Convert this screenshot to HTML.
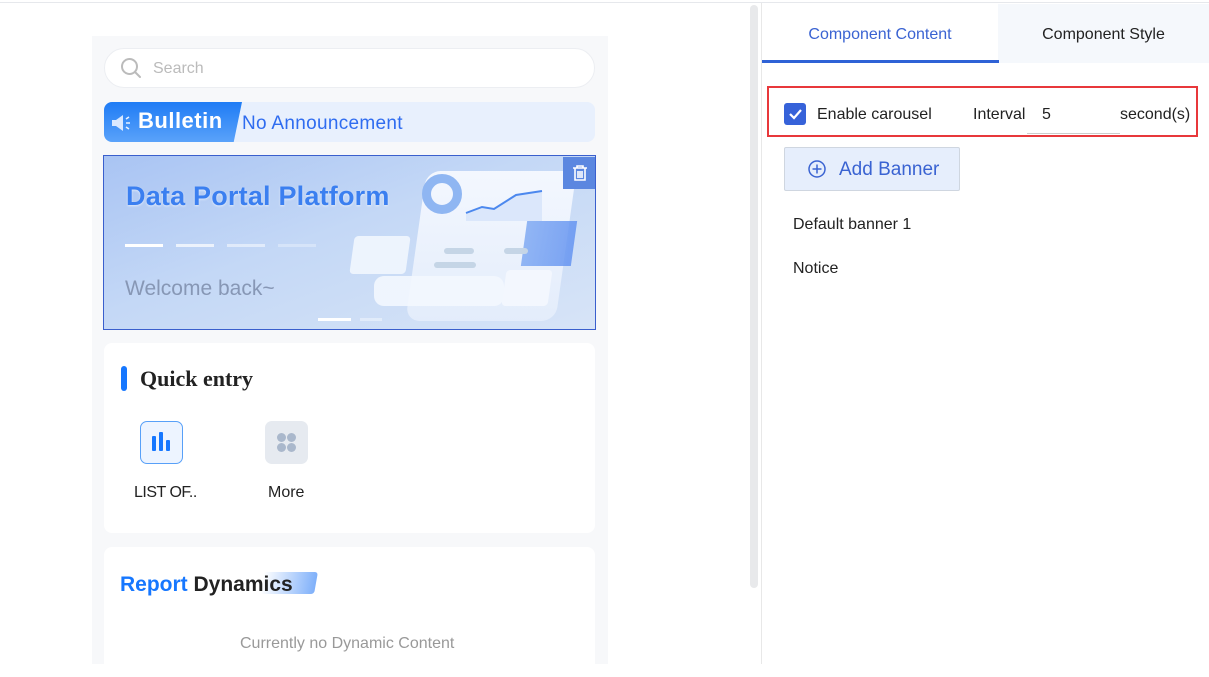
<!DOCTYPE html>
<html><head><meta charset="utf-8"><style>
*{box-sizing:border-box;margin:0;padding:0}
body{width:1209px;height:664px;overflow:hidden;background:#fff;font-family:"Liberation Sans",sans-serif;position:relative}
.a{position:absolute}
</style></head><body>
<div class="a" style="left:0;top:2px;width:1209px;height:1px;background:#e6e8ec"></div>
<!-- left phone -->
<div class="a" style="left:92px;top:36px;width:516px;height:628px;background:#f7f8fa"></div>
<div class="a" style="left:104px;top:48px;width:491px;height:40px;background:#fff;border:1px solid #eceef2;border-radius:20px"></div>
<svg class="a" style="left:120px;top:57px" width="22" height="22" viewBox="0 0 22 22"><circle cx="9.5" cy="9.5" r="7.5" fill="none" stroke="#bbb" stroke-width="2"/><path d="M15 15l5 5" stroke="#bbb" stroke-width="2" stroke-linecap="round"/></svg>
<div class="a" style="left:153px;top:60px;font-size:16px;color:#bbb">Search</div>
<div class="a" style="left:104px;top:102px;width:491px;height:40px;background:#e8f0fd;border-radius:8px"></div>
<div class="a" style="left:104px;top:102px;width:138px;height:40px;background:linear-gradient(180deg,#1f7cf5,#5aa2fa);border-radius:8px 0 0 8px;clip-path:polygon(0 0,100% 0,94% 100%,0 100%)"></div>
<svg class="a" style="left:110px;top:113px" width="22" height="20" viewBox="0 0 22 20"><path d="M2 7h4l7-5v16l-7-5H2z" fill="#eaf2ff" opacity=".9"/><path d="M16 6l3-2M16 10h4M16 14l3 2" stroke="#eaf2ff" stroke-width="1.5"/></svg>
<div class="a" style="left:138px;top:108px;font-size:22px;font-weight:bold;color:#fff;letter-spacing:0.5px">Bulletin</div>
<div class="a" style="left:242px;top:113px;font-size:19px;color:#2f6cf0;letter-spacing:0.3px">No Announcement</div>
<div class="a" style="left:103px;top:155px;width:493px;height:175px;border:1px solid #3a5fcd;background:linear-gradient(160deg,#a9c4f3 0%,#c4d8f6 45%,#d7e4f7 100%);overflow:hidden">
 <div class="a" style="left:22px;top:25px;font-size:27px;font-weight:bold;color:#3b7ff0;letter-spacing:0.2px;text-shadow:0 1px 2px rgba(255,255,255,.6)">Data Portal Platform</div>
 <div class="a" style="left:21px;top:88px;width:38px;height:3px;background:#fff"></div>
 <div class="a" style="left:72px;top:88px;width:38px;height:3px;background:#fff;opacity:.7"></div>
 <div class="a" style="left:123px;top:88px;width:38px;height:3px;background:#fff;opacity:.5"></div>
 <div class="a" style="left:174px;top:88px;width:38px;height:3px;background:#fff;opacity:.3"></div>
 <div class="a" style="left:21px;top:121px;font-size:21px;color:#8797b5">Welcome back~</div>
 <div class="a" style="left:214px;top:162px;width:33px;height:3px;background:#fff"></div>
 <div class="a" style="left:256px;top:162px;width:22px;height:3px;background:#fff;opacity:.4"></div>
 <div class="a" style="left:312px;top:15px;width:150px;height:150px;background:linear-gradient(180deg,#f6f9ff,#e4edfb);border-radius:14px;transform:skewX(-8deg);opacity:.95"></div>
 <div class="a" style="left:318px;top:18px;width:40px;height:40px;border-radius:50%;border:9px solid #8fb6f2"></div>
 <path></path>
 <svg class="a" style="left:360px;top:25px" width="90" height="40" viewBox="0 0 90 40"><path d="M2 32l16-6 12 2 22-14 26-4v30H2z" fill="#dbe7fb"/><path d="M2 32l16-6 12 2 22-14 26-4" fill="none" stroke="#4c88ee" stroke-width="2"/></svg>
 <div class="a" style="left:420px;top:65px;width:50px;height:45px;background:linear-gradient(90deg,#7aa6f2,#5e8ff0);opacity:.8;transform:skewX(-8deg)"></div>
 <div class="a" style="left:248px;top:80px;width:56px;height:38px;background:#f1f6fe;border-radius:4px;opacity:.9;transform:skewX(-8deg)"></div>
 <div class="a" style="left:340px;top:92px;width:30px;height:6px;background:#c5d5e6;border-radius:3px"></div>
 <div class="a" style="left:330px;top:106px;width:42px;height:6px;background:#c5d5e6;border-radius:3px"></div>
 <div class="a" style="left:400px;top:92px;width:24px;height:6px;background:#c5d5e6;border-radius:3px"></div>
 <div class="a" style="left:270px;top:120px;width:130px;height:30px;background:#f3f7fe;border-radius:10px;opacity:.9"></div>
 <div class="a" style="left:400px;top:114px;width:46px;height:36px;background:#f3f7fe;border-radius:4px;transform:skewX(-8deg)"></div>
 <div class="a" style="left:459px;top:1px;width:33px;height:32px;background:#5b87e0"></div>
 <svg class="a" style="left:467px;top:8px" width="18" height="18" viewBox="0 0 18 18"><path d="M2 4h14M6 4V2h6v2M4 4v12h10V4M7 7v7M9 7v7M11 7v7" fill="none" stroke="#fff" stroke-width="1.6"/></svg>
</div>
<!-- quick entry -->
<div class="a" style="left:104px;top:343px;width:491px;height:190px;background:#fff;border-radius:8px"></div>
<div class="a" style="left:121px;top:366px;width:6px;height:25px;background:#1677ff;border-radius:3px"></div>
<div class="a" style="left:140px;top:366px;font-family:'Liberation Serif',serif;font-size:22px;font-weight:bold;color:#222">Quick entry</div>
<div class="a" style="left:140px;top:421px;width:43px;height:43px;border:1.5px solid #58a0f8;background:#edf4ff;border-radius:7px"></div>
<div class="a" style="left:152px;top:436px;width:4px;height:15px;background:#1677ff;border-radius:1px"></div>
<div class="a" style="left:159px;top:432px;width:4px;height:19px;background:#1677ff;border-radius:1px"></div>
<div class="a" style="left:166px;top:440px;width:4px;height:11px;background:#1677ff;border-radius:1px"></div>
<div class="a" style="left:265px;top:421px;width:43px;height:43px;background:#e6eaf0;border-radius:7px"></div>
<svg class="a" style="left:276px;top:432px" width="21" height="21" viewBox="0 0 21 21"><g fill="#aab8cc"><circle cx="5.5" cy="5.5" r="4.5"/><circle cx="15.5" cy="5.5" r="4.5"/><circle cx="5.5" cy="15.5" r="4.5"/><circle cx="15.5" cy="15.5" r="4.5"/></g></svg>
<div class="a" style="left:134px;top:484px;font-size:16px;color:#222;letter-spacing:-0.5px">LIST OF..</div>
<div class="a" style="left:268px;top:484px;font-size:16px;color:#222">More</div>
<!-- report -->
<div class="a" style="left:104px;top:547px;width:491px;height:130px;background:#fff;border-radius:8px"></div>
<div class="a" style="left:262px;top:572px;width:54px;height:22px;background:linear-gradient(90deg,rgba(120,170,250,0),#7fb0fa);transform:skewX(-10deg);border-radius:3px"></div>
<div class="a" style="left:120px;top:573px;font-size:21px;font-weight:bold;color:#1677ff">Report <span style="color:#222">Dynamics</span></div>
<div class="a" style="left:240px;top:635px;font-size:16px;color:#999">Currently no Dynamic Content</div>
<!-- scrollbar -->
<div class="a" style="left:750px;top:5px;width:8px;height:583px;background:#e8e9eb;border-radius:4px"></div>
<div class="a" style="left:761px;top:3px;width:1px;height:661px;background:#e8e8e8"></div>
<!-- right -->
<div class="a" style="left:998px;top:4px;width:211px;height:59px;background:#f5f8fc"></div>
<div class="a" style="left:762px;top:60px;width:237px;height:3px;background:#2f62d6"></div>
<div class="a" style="left:762px;top:26px;width:236px;text-align:center;font-size:16px;color:#3a63d2">Component Content</div>
<div class="a" style="left:998px;top:26px;width:211px;text-align:center;font-size:16px;color:#222">Component Style</div>
<div class="a" style="left:767px;top:86px;width:431px;height:51px;border:2px solid #e8383b"></div>
<div class="a" style="left:784px;top:103px;width:22px;height:22px;background:#3662d9;border-radius:3px"></div>
<svg class="a" style="left:784px;top:103px" width="22" height="22" viewBox="0 0 22 22"><path d="M6 11l4 4 7-8" fill="none" stroke="#fff" stroke-width="2.2"/></svg>
<div class="a" style="left:817px;top:106px;font-size:16px;color:#222">Enable carousel</div>
<div class="a" style="left:973px;top:106px;font-size:16px;color:#222">Interval</div>
<div class="a" style="left:1042px;top:106px;font-size:16px;color:#222">5</div>
<div class="a" style="left:1027px;top:133px;width:93px;height:1px;background:#ccc"></div>
<div class="a" style="left:1120px;top:106px;font-size:16px;color:#222">second(s)</div>
<div class="a" style="left:784px;top:147px;width:176px;height:44px;background:#e6eefc;border:1px solid #cfd6e0;border-radius:2px"></div>
<svg class="a" style="left:807px;top:159px" width="20" height="20" viewBox="0 0 20 20"><circle cx="10" cy="10" r="8" fill="none" stroke="#3a63d2" stroke-width="1.5"/><path d="M10 5.5v9M5.5 10h9" stroke="#3a63d2" stroke-width="1.5"/></svg>
<div class="a" style="left:839px;top:159px;font-size:19px;color:#3a63d2">Add Banner</div>
<div class="a" style="left:793px;top:216px;font-size:16px;color:#222">Default banner 1</div>
<div class="a" style="left:793px;top:260px;font-size:16px;color:#222">Notice</div>
</body></html>
